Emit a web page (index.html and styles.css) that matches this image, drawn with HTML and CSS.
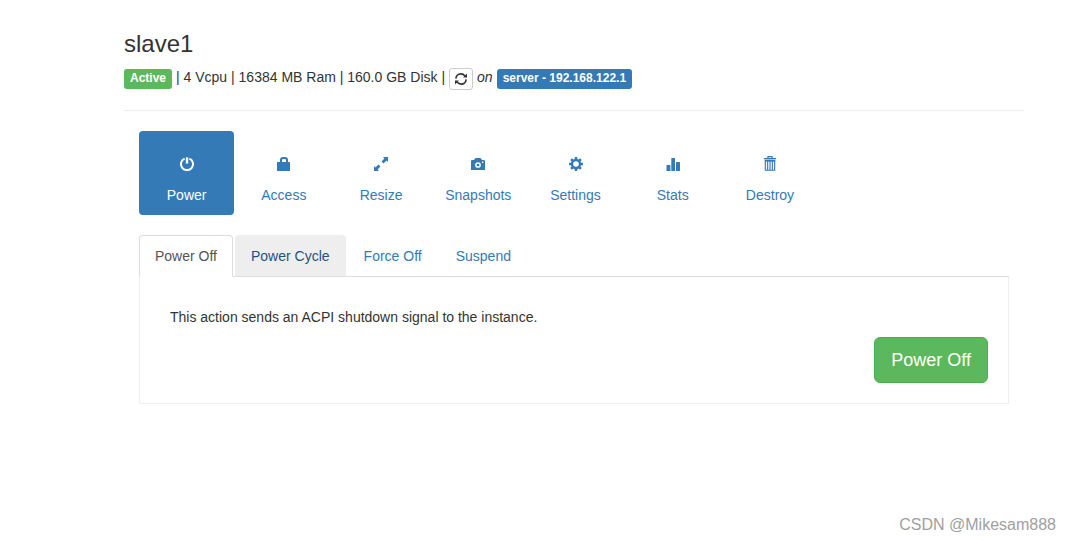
FILE: index.html
```html
<!DOCTYPE html>
<html lang="en">
<head>
<meta charset="utf-8">
<title>slave1</title>
<link rel="stylesheet" href="styles.css">
</head>
<body>
<main class="page">
  <header class="header">
    <h1 class="title">slave1</h1>
    <div class="summary">
      <span class="label label-success">Active</span>
      <span class="summary-text">| 4 Vcpu | 16384 MB Ram | 160.0 GB Disk |</span>
      <button class="refresh" type="button" aria-label="Refresh">
        <svg class="refresh-icon" viewBox="0 0 12 12" fill="none" stroke="currentColor" stroke-width="1.6"><path d="M.9 5.6C1 2.8 3.2 .9 5.8 .9C7.6 .9 8.9 1.6 10 3M11.1 6.4C11 9.2 8.8 11.1 6.2 11.1C4.4 11.1 3.1 10.4 2 9"/><path d="M12 .6V4.6H8ZM0 11.4V7.4H4Z" fill="currentColor" stroke="none"/></svg>
      </button>
      <em class="summary-text">on</em>
      <span class="label label-primary">server - 192.168.122.1</span>
    </div>
  </header>

  <div class="content">
    <nav class="pills">
      <a class="pill pill-active" href="#power">
        <svg class="icon" viewBox="0 0 14 14" fill="none" stroke="currentColor" stroke-width="2"><path d="M4.6 1.6A6 6 0 1 0 9.4 1.6"/><path d="M7 .4V6.6" stroke-width="2.4"/></svg>
        Power</a>
      <a class="pill" href="#access">
        <svg class="icon" viewBox="0 0 14 14" fill="currentColor"><path d="M0 5.7Q0 5 .7 5H3V3Q3 0 6 0H8Q11 0 11 3V5H12.3Q13 5 13 5.7V14H0ZM5 5H9V3.2Q9 2 7.8 2H6.2Q5 2 5 3.2Z"/></svg>
        Access</a>
      <a class="pill" href="#resize">
        <svg class="icon" viewBox="0 0 14 14" fill="currentColor"><path d="M9 0H14V5L12.6 3.6L9.4 6.4L7.6 4.6L10.4 1.4ZM0 9L1.4 10.4L4.6 7.6L6.4 9.4L3.6 12.6L5 14H0Z"/></svg>
        Resize</a>
      <a class="pill" href="#snapshots">
        <svg class="icon" viewBox="0 0 14 14"><path fill="currentColor" d="M1.2 3H3L4.5 1H9.5L11 3H12.8Q14 3 14 4.2V13H0V4.2Q0 3 1.2 3Z"/><circle cx="7" cy="8" r="2.1" fill="none" stroke="#fff" stroke-width="1.5"/><path fill="#fff" d="M11 4.5H12.3V6H11Z"/></svg>
        Snapshots</a>
      <a class="pill" href="#settings">
        <svg class="icon" viewBox="0 0 14 14" fill="none" stroke="currentColor"><circle cx="7" cy="7" r="4" stroke-width="2.4"/><path stroke-width="2.5" d="M7 0V2.5M7 11.5V14M0 7H2.5M11.5 7H14M2.1 2.1L3.8 3.8M10.2 10.2L11.9 11.9M11.9 2.1L10.2 3.8M3.8 10.2L2.1 11.9"/></svg>
        Settings</a>
      <a class="pill" href="#stats">
        <svg class="icon" viewBox="0 0 14 14" fill="currentColor"><path d="M.5 8.5Q.5 8 1 8H4Q4.4 8 4.4 8.5V14H.5ZM5.3 1.5Q5.3 1 5.8 1H8.5Q9 1 9 1.5V14H5.3ZM10 5.5Q10 5 10.5 5H13.5Q14 5 14 5.5V14H10Z"/></svg>
        Stats</a>
      <a class="pill" href="#destroy">
        <svg class="icon icon-trash" viewBox="0 0 14 16" fill="none" stroke="currentColor"><path d="M.5 2.8H13.5M4.8 2.5V.7H9.2V2.5" stroke-width="1.3"/><path d="M2 5V15.2H12V5M4.5 5V15M7 5V15M9.5 5V15" stroke-width="1.2"/><path d="M1.4 5H12.6" stroke-width="2"/></svg>
        Destroy</a>
    </nav>

    <nav class="tabs">
      <a class="tab tab-active" href="#poweroff">Power Off</a>
      <a class="tab tab-hover" href="#powercycle">Power Cycle</a>
      <a class="tab" href="#forceoff">Force Off</a>
      <a class="tab" href="#suspend">Suspend</a>
    </nav>
    <section class="panel">
      <p class="message">This action sends an ACPI shutdown signal to the instance.</p>
      <button class="action" type="button">Power Off</button>
    </section>
  </div>
</main>
<footer class="watermark">CSDN @Mikesam888</footer>
</body>
</html>
```
FILE: styles.css
```css
* { box-sizing: border-box; }
body {
  margin: 0;
  min-height: 100vh;
  display: flex;
  flex-direction: column;
  background: #fff;
  color: #333;
  font: 14px/20px "Liberation Sans", Arial, sans-serif;
}
a { color: #337ab7; text-decoration: none; }
.page { padding: 31px 47px 0 124px; }
.header { padding-bottom: 20px; border-bottom: 1px solid #eee; }
.title { margin: 0 0 10px; font-size: 24px; line-height: 26px; font-weight: 400; }
.summary { display: flex; align-items: center; gap: 4px; height: 23px; white-space: nowrap; }
.summary-text { padding-bottom: 3px; }
.label {
  padding: 0 6px 2px;
  border-radius: 3px;
  color: #fff;
  font-size: 12px;
  line-height: 18px;
  font-weight: 700;
}
.label-success { background: #5cb85c; }
.label-primary { background: #337ab7; }
.refresh {
  display: flex;
  align-items: center;
  height: 22px;
  padding: 0 5px;
  border: 1px solid #ccc;
  border-radius: 3px;
  background: #fff;
  color: #333;
}
.refresh-icon { width: 12px; height: 12px; }
.content { padding: 20px 15px 0; }
.pills {
  display: grid;
  grid-template-columns: repeat(7, 1fr);
  gap: 2px;
  width: 78%;
  min-width: 600px;
  margin-bottom: 20px;
}
.pill {
  display: flex;
  flex-direction: column;
  align-items: center;
  justify-content: flex-end;
  gap: 14px;
  padding: 25px 0 10px;
  border-radius: 4px;
}
.pill-active { padding-top: 26px; background: #337ab7; color: #fff; }
.icon { width: 14px; height: 14px; }
.icon-trash { height: 15px; }
.tabs { display: flex; gap: 2px; border-bottom: 1px solid #ddd; }
.tab {
  margin-bottom: -1px;
  padding: 10px 15px;
  border: 1px solid transparent;
  border-radius: 4px 4px 0 0;
}
.tab-active { border-color: #ddd #ddd #fff; background: #fff; color: #555; }
.tab-hover { border-color: #eee #eee #ddd; background: #eee; color: #23527c; }
.panel {
  display: flex;
  flex-direction: column;
  padding: 30px 20px 20px;
  border: 1px solid #eee;
  border-top: 0;
}
.message { margin: 0 10px 10px; }
.action {
  align-self: flex-end;
  padding: 10px 16px;
  border: 1px solid #4cae4c;
  border-radius: 6px;
  background: #5cb85c;
  color: #fff;
  font: 18px/24px "Liberation Sans", Arial, sans-serif;
}
.watermark {
  margin-top: auto;
  padding: 0 15px 6px;
  color: #a0a0a0;
  text-align: right;
  font-size: 16px;
}
```
